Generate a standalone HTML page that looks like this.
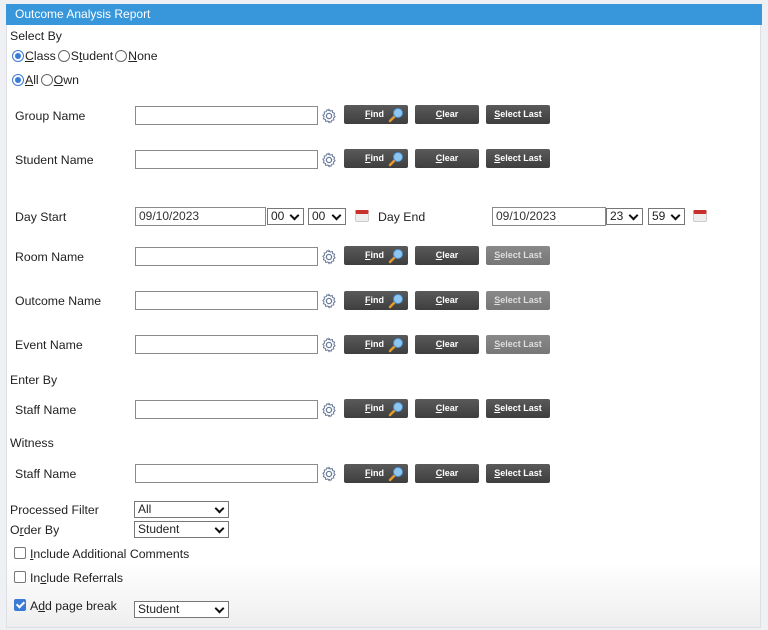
<!DOCTYPE html>
<html><head><style>
body{margin:0;width:768px;height:630px;background:#eef0f4;font-family:"Liberation Sans",sans-serif;font-size:12.3px;color:#222;position:relative;overflow:hidden}
.panel{position:absolute;left:6px;top:4px;width:755px;height:624px;background:#fff;border:1px solid #dcdfe4;box-sizing:border-box}
.foot{position:absolute;left:7px;top:563px;width:753px;height:64px;background:linear-gradient(#fff,#eeeeee)}
.hdr{position:absolute;left:6px;top:4px;width:756px;height:21px;background:#3896da;color:#fff;font-size:12px;line-height:21px;padding-left:9px;box-sizing:border-box}
.a{position:absolute;white-space:nowrap}
.lbl{position:absolute;white-space:nowrap;line-height:14px}
.inp{position:absolute;height:19px;border:1px solid #8a8a8a;box-sizing:border-box;background:#fff;font-size:12px;line-height:17px;padding-left:3px;color:#333}
.btn{position:absolute;height:19px;width:64px;background:linear-gradient(#5a5a5a,#3e3e3e);border-radius:2px;color:#fff;font-size:9px;font-weight:bold;text-align:center;line-height:18px}
.btn.dis{background:linear-gradient(#8a8a8a,#777);color:#ddd}
.btn svg{position:absolute;right:4px;top:2px}
.btn.f{text-align:left;text-indent:21px}
.sel{position:absolute;height:17px;border:1px solid #777;box-sizing:border-box;background:#fff;font-size:12px;line-height:15px;padding-left:3px}
.sel::after{content:"";position:absolute;right:5px;top:3px;width:5px;height:5px;border-right:2px solid #111;border-bottom:2px solid #111;transform:rotate(45deg)}
.radio{display:inline-block;width:12px;height:12px;border:1px solid #666;border-radius:50%;vertical-align:-2px;margin-right:1px;box-sizing:border-box;position:relative}
.radio.on{border-color:#3a7bd5}
.radio.on::after{content:"";position:absolute;left:2px;top:2px;width:6px;height:6px;border-radius:50%;background:#3a7bd5}
.cb{position:absolute;width:12px;height:12px;border:1px solid #777;border-radius:2px;box-sizing:border-box;background:#fff}
.cal{position:absolute;width:14px;height:12px;background:#eee;border:1px solid #ccc;box-sizing:border-box;border-top:4px solid #c9302c;border-radius:2px}
</style></head><body>
<div class="panel"></div>
<div class="foot"></div>
<div class="hdr">Outcome Analysis Report</div>

<div class="lbl" style="left:10px;top:29px">Select By</div>
<div class="lbl" style="left:12px;top:49px"><span class="radio on"></span><u>C</u>lass<span class="radio" style="margin-left:2px"></span>S<u>t</u>udent<span class="radio" style="margin-left:2px"></span><u>N</u>one</div>
<div class="lbl" style="left:12px;top:73px"><span class="radio on"></span><u>A</u>ll<span class="radio" style="margin-left:2px"></span><u>O</u>wn</div>

<svg width="0" height="0" style="position:absolute"><defs><g id="gear"><circle cx="8" cy="8" r="2.6" fill="none" stroke="#6a7a99" stroke-width="1.3"/><path d="M8 1.5l1.3 1.6 2-.6.3 2 2 .8-.7 1.9 1.2 1.6-1.6 1.2.3 2-2 .3-.8 1.9-1.9-.7L8 14.5l-1.3-1.6-2 .6-.3-2-2-.8.7-1.9L1.9 7.2l1.6-1.2-.3-2 2-.3.8-1.9 1.9.7z" fill="none" stroke="#6a7a99" stroke-width="1"/></g>
<g id="mag"><line x1="2" y1="14" x2="7" y2="9" stroke="#e89a2c" stroke-width="2.5" stroke-linecap="round"/><circle cx="10" cy="6" r="4.5" fill="#8fc6f0" stroke="#4a90d0" stroke-width="1"/></g></defs></svg>

<div class="lbl" style="left:15px;top:109px">Group Name</div>
<div class="inp" style="left:135px;top:106px;width:183px"></div>
<svg class="a" style="left:321px;top:108px" width="16" height="16"><use href="#gear"/></svg>
<div class="btn f" style="left:344px;top:105px"><u>F</u>ind<svg width="16" height="16"><use href="#mag"/></svg></div>
<div class="btn" style="left:415px;top:105px"><u>C</u>lear</div>
<div class="btn" style="left:486px;top:105px"><u>S</u>elect Last</div>

<div class="lbl" style="left:15px;top:153px">Student Name</div>
<div class="inp" style="left:135px;top:150px;width:183px"></div>
<svg class="a" style="left:321px;top:152px" width="16" height="16"><use href="#gear"/></svg>
<div class="btn f" style="left:344px;top:149px"><u>F</u>ind<svg width="16" height="16"><use href="#mag"/></svg></div>
<div class="btn" style="left:415px;top:149px"><u>C</u>lear</div>
<div class="btn" style="left:486px;top:149px"><u>S</u>elect Last</div>

<div class="lbl" style="left:15px;top:210px">Day Start</div>
<div class="inp" style="left:135px;top:207px;width:131px">09/10/2023</div>
<div class="sel" style="left:267px;top:208px;width:37px">00</div>
<div class="sel" style="left:308px;top:208px;width:38px">00</div>
<div class="cal" style="left:355px;top:210px"></div>
<div class="lbl" style="left:378px;top:210px">Day End</div>
<div class="inp" style="left:492px;top:207px;width:114px">09/10/2023</div>
<div class="sel" style="left:606px;top:208px;width:37px">23</div>
<div class="sel" style="left:648px;top:208px;width:37px">59</div>
<div class="cal" style="left:693px;top:210px"></div>

<div class="lbl" style="left:15px;top:250px">Room Name</div>
<div class="inp" style="left:135px;top:247px;width:183px"></div>
<svg class="a" style="left:321px;top:249px" width="16" height="16"><use href="#gear"/></svg>
<div class="btn f" style="left:344px;top:246px"><u>F</u>ind<svg width="16" height="16"><use href="#mag"/></svg></div>
<div class="btn" style="left:415px;top:246px"><u>C</u>lear</div>
<div class="btn dis" style="left:486px;top:246px"><u>S</u>elect Last</div>

<div class="lbl" style="left:15px;top:294px">Outcome Name</div>
<div class="inp" style="left:135px;top:291px;width:183px"></div>
<svg class="a" style="left:321px;top:293px" width="16" height="16"><use href="#gear"/></svg>
<div class="btn f" style="left:344px;top:291px"><u>F</u>ind<svg width="16" height="16"><use href="#mag"/></svg></div>
<div class="btn" style="left:415px;top:291px"><u>C</u>lear</div>
<div class="btn dis" style="left:486px;top:291px"><u>S</u>elect Last</div>

<div class="lbl" style="left:15px;top:338px">Event Name</div>
<div class="inp" style="left:135px;top:335px;width:183px"></div>
<svg class="a" style="left:321px;top:337px" width="16" height="16"><use href="#gear"/></svg>
<div class="btn f" style="left:344px;top:335px"><u>F</u>ind<svg width="16" height="16"><use href="#mag"/></svg></div>
<div class="btn" style="left:415px;top:335px"><u>C</u>lear</div>
<div class="btn dis" style="left:486px;top:335px"><u>S</u>elect Last</div>

<div class="lbl" style="left:10px;top:373px">Enter By</div>
<div class="lbl" style="left:15px;top:403px">Staff Name</div>
<div class="inp" style="left:135px;top:400px;width:183px"></div>
<svg class="a" style="left:321px;top:402px" width="16" height="16"><use href="#gear"/></svg>
<div class="btn f" style="left:344px;top:399px"><u>F</u>ind<svg width="16" height="16"><use href="#mag"/></svg></div>
<div class="btn" style="left:415px;top:399px"><u>C</u>lear</div>
<div class="btn" style="left:486px;top:399px"><u>S</u>elect Last</div>

<div class="lbl" style="left:10px;top:436px">Witness</div>
<div class="lbl" style="left:15px;top:467px">Staff Name</div>
<div class="inp" style="left:135px;top:464px;width:183px"></div>
<svg class="a" style="left:321px;top:466px" width="16" height="16"><use href="#gear"/></svg>
<div class="btn f" style="left:344px;top:464px"><u>F</u>ind<svg width="16" height="16"><use href="#mag"/></svg></div>
<div class="btn" style="left:415px;top:464px"><u>C</u>lear</div>
<div class="btn" style="left:486px;top:464px"><u>S</u>elect Last</div>

<div class="lbl" style="left:10px;top:503px">Processed Filter</div>
<div class="sel" style="left:134px;top:501px;width:95px">All</div>
<div class="lbl" style="left:10px;top:523px">O<u>r</u>der By</div>
<div class="sel" style="left:134px;top:521px;width:95px">Student</div>

<div class="cb" style="left:14px;top:547px"></div>
<div class="lbl" style="left:30px;top:547px"><u>I</u>nclude Additional Comments</div>
<div class="cb" style="left:14px;top:571px"></div>
<div class="lbl" style="left:30px;top:571px">In<u>c</u>lude Referrals</div>
<div class="cb" style="left:14px;top:599px;background:#3a7bd5;border-color:#3a7bd5"><div style="position:absolute;left:3px;top:0px;width:3px;height:6px;border-right:2px solid #fff;border-bottom:2px solid #fff;transform:rotate(45deg)"></div></div>
<div class="lbl" style="left:30px;top:599px">A<u>d</u>d page break</div>
<div class="sel" style="left:134px;top:601px;width:95px">Student</div>
</body></html>
